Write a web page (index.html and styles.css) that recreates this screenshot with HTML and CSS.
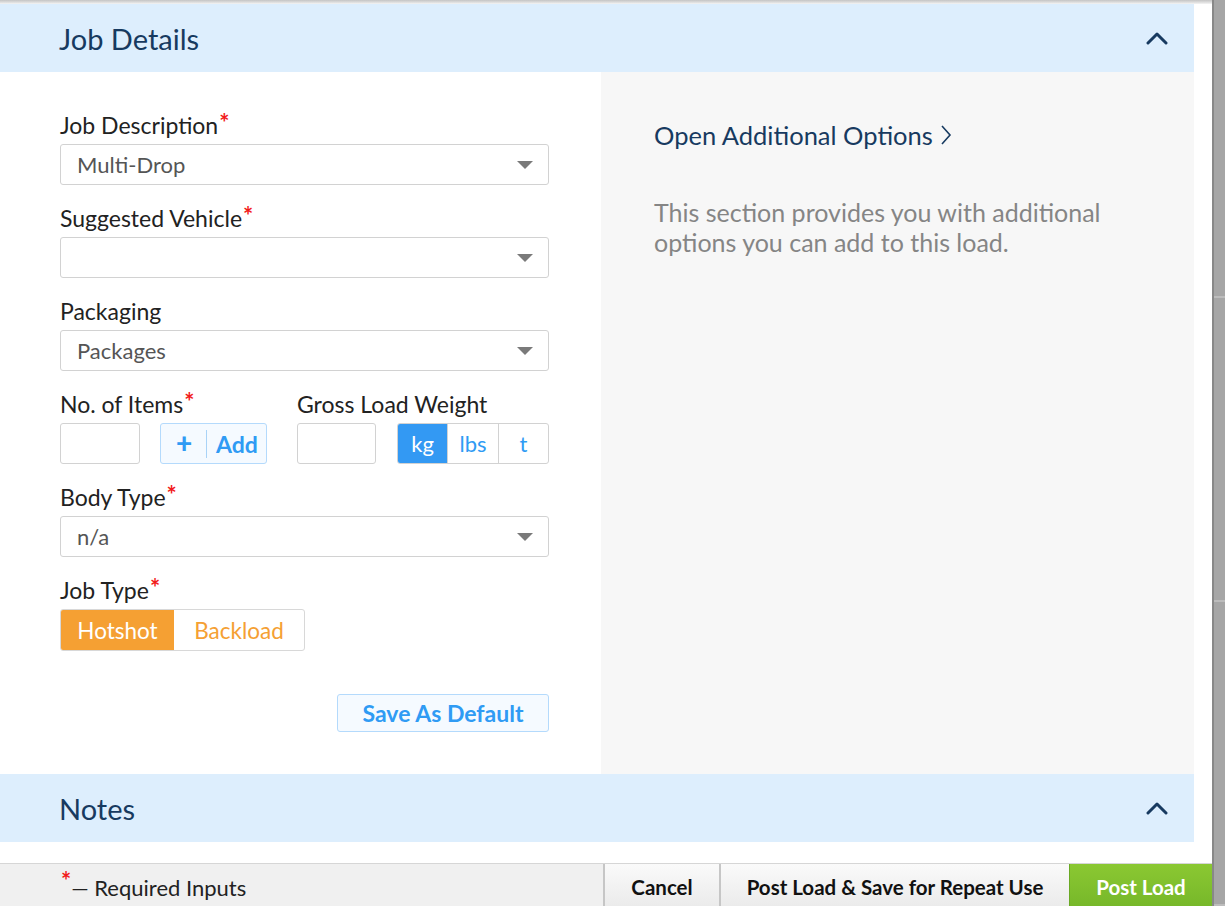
FILE: index.html
```html
<!DOCTYPE html>
<html lang="en">
<head>
 <meta charset="UTF-8">
 <title>Post Load - Job Details</title>
 <link rel="stylesheet" href="styles.css">
</head>
<body>
<div class="screen">
 <div class="modal">
   <div class="top-shade"></div>
   <div class="sections">
     <div class="panel-head">
       <h2>Job Details</h2>
       <svg class="chevron" viewBox="0 0 24 14" width="24" height="14"><path d="M3 12 L12 3 L21 12"/></svg>
     </div>
     <div class="panel-body">
       <div class="form-col">
         <div class="field">
           <label>Job Description<span class="req">*</span></label>
           <div class="select"><span>Multi-Drop</span><i class="caret"></i></div>
         </div>
         <div class="field">
           <label>Suggested Vehicle<span class="req">*</span></label>
           <div class="select"><span></span><i class="caret"></i></div>
         </div>
         <div class="field">
           <label>Packaging</label>
           <div class="select"><span>Packages</span><i class="caret"></i></div>
         </div>
         <div class="field split">
           <div class="sub items">
             <label>No. of Items<span class="req">*</span></label>
             <div class="inline">
               <div class="box small"></div>
               <button class="add-btn"><b>+</b><span class="div"></span>Add</button>
             </div>
           </div>
           <div class="sub weight">
             <label>Gross Load Weight</label>
             <div class="inline">
               <div class="box small"></div>
               <div class="units">
                 <span class="on">kg</span>
                 <span>lbs</span>
                 <span>t</span>
               </div>
             </div>
           </div>
         </div>
         <div class="field">
           <label>Body Type<span class="req">*</span></label>
           <div class="select"><span>n/a</span><i class="caret"></i></div>
         </div>
         <div class="field">
           <label>Job Type<span class="req">*</span></label>
           <div class="toggle">
             <span class="on">Hotshot</span>
             <span>Backload</span>
           </div>
         </div>
         <div class="save-row">
           <button class="save-btn">Save As Default</button>
         </div>
       </div>
       <div class="extra-col">
         <a class="more-link">Open Additional Options <svg viewBox="0 0 12 22" width="12" height="22"><path d="M2 2 L10 11 L2 20"/></svg></a>
         <p>This section provides you with additional options you can add to this load.</p>
       </div>
     </div>
     <div class="panel-head">
       <h2>Notes</h2>
       <svg class="chevron" viewBox="0 0 24 14" width="24" height="14"><path d="M3 12 L12 3 L21 12"/></svg>
     </div>
   </div>
   <div class="footer">
     <div class="legend"><span class="req">*</span>— Required Inputs</div>
     <div class="actions">
       <button class="grey">Cancel</button>
       <button class="grey">Post Load &amp; Save for Repeat Use</button>
       <button class="go">Post Load</button>
     </div>
   </div>
 </div>
 <div class="scrollbar">
   <div class="seg"></div>
   <div class="seg"></div>
   <div class="seg"></div>
 </div>
</div>
</body>
</html>
```

FILE: styles.css
```css
html, body {
  margin: 0;
  padding: 0;
  height: 100%;
  overflow: hidden;
}
body {
  font-family: Lato, "Open Sans", sans-serif;
  color: #222;
  background: #fff;
}
.screen {
  display: flex;
  height: 906px;
}
.modal {
  width: 1212px;
  flex-shrink: 0;
  display: flex;
  flex-direction: column;
  background: #fff;
}
.top-shade {
  height: 7px;
  background: linear-gradient(#c4c4c4, #e6e6e6 75%, #f6f6f6);
}
.sections {
  padding-right: 18px;
}
.panel-head {
  height: 68px;
  background: #ddeefd;
  display: flex;
  align-items: center;
  justify-content: space-between;
  padding: 0 25px 0 59px;
}
.panel-head h2 {
  margin: 0;
  font-size: 29px;
  font-weight: 400;
  color: #173a60;
}
.chevron path {
  fill: none;
  stroke: #173a60;
  stroke-width: 3;
  stroke-linecap: round;
  stroke-linejoin: round;
}
.panel-body {
  display: grid;
  grid-template-columns: 601px 1fr;
}
.form-col {
  padding: 40px 52px 42px 60px;
}
.extra-col {
  background: #f7f7f7;
  padding: 48px 60px 0 53px;
}
.field {
  margin-bottom: 20px;
}
label {
  display: block;
  font-size: 23px;
  line-height: 26px;
  margin-bottom: 6px;
  color: #222;
}
.req {
  color: #f21b1b;
  font-size: 24px;
  font-weight: 700;
  vertical-align: 2px;
  line-height: 0;
  margin-left: 1px;
}
.select {
  height: 41px;
  box-sizing: border-box;
  border: 1px solid #d2d2d2;
  border-radius: 3px;
  display: flex;
  align-items: center;
  justify-content: space-between;
  padding: 0 15px 0 16px;
  font-size: 22px;
  color: #555;
}
.caret {
  width: 0;
  height: 0;
  border-left: 8px solid transparent;
  border-right: 8px solid transparent;
  border-top: 8px solid #7a7a7a;
}
.split {
  display: flex;
  gap: 30px;
}
.inline {
  display: flex;
  gap: 20px;
}
.box {
  height: 41px;
  box-sizing: border-box;
  border: 1px solid #d2d2d2;
  border-radius: 3px;
}
.box.small {
  width: 80px;
}
.add-btn {
  width: 107px;
  height: 41px;
  border: 1px solid #b4dafc;
  border-radius: 3px;
  background: #f5faff;
  color: #2f9bf4;
  font-family: inherit;
  font-size: 23px;
  font-weight: 700;
  display: flex;
  align-items: center;
  padding: 0 0 0 15px;
}
.add-btn b {
  font-size: 28px;
  width: 16px;
  line-height: 1;
  margin-top: -3px;
}
.add-btn .div {
  width: 1px;
  height: 28px;
  background: #a9d3f7;
  margin: 0 9px 0 14px;
}
.weight .inline {
  gap: 21px;
}
.weight .box.small {
  width: 79px;
}
.units {
  display: flex;
  border: 1px solid #d2d2d2;
  border-radius: 3px;
  height: 41px;
  box-sizing: border-box;
  width: 152px;
  overflow: hidden;
}
.units span {
  flex: 1;
  display: flex;
  align-items: center;
  justify-content: center;
  font-size: 22px;
  color: #2f9bf4;
  border-left: 1px solid #d2d2d2;
}
.units span:first-child {
  border-left: none;
}
.units span.on {
  background: #3399f3;
  color: #fff;
}
.toggle {
  display: flex;
  width: 245px;
  height: 42px;
  box-sizing: border-box;
  border: 1px solid #d8d8d8;
  border-radius: 3px;
  overflow: hidden;
}
.toggle span {
  display: flex;
  align-items: center;
  justify-content: center;
  font-size: 22.5px;
  color: #f5a033;
  flex: 1;
}
.toggle span.on {
  flex: 0 0 113px;
  background: #f5a033;
  color: #fff;
}
.save-row {
  display: flex;
  justify-content: flex-end;
  margin-top: 43px;
}
.save-btn {
  width: 212px;
  height: 38px;
  border: 1px solid #b4dafc;
  border-radius: 3px;
  background: #f5faff;
  color: #2f9bf4;
  font-family: inherit;
  font-size: 23px;
  font-weight: 700;
}
.more-link {
  display: flex;
  align-items: center;
  gap: 7px;
  font-size: 25.5px;
  line-height: 30px;
  color: #173a60;
}
.more-link path {
  fill: none;
  stroke: #173a60;
  stroke-width: 1.6;
}
.extra-col p {
  margin: 47px 0 0;
  font-size: 25px;
  line-height: 30px;
  color: #858585;
}
.footer {
  margin-top: 21px;
  height: 42px;
  background: #f0f0f0;
  border-top: 1px solid #d6d6d6;
  display: flex;
  justify-content: space-between;
}
.legend {
  padding: 10px 0 0 61px;
  font-size: 22px;
  color: #222;
}
.legend .req {
  margin: 0;
  vertical-align: 6px;
}
.actions {
  display: flex;
}
.actions button {
  border: none;
  font-family: inherit;
  font-size: 20.5px;
  font-weight: 700;
  padding: 4px 0 0;
  height: 42px;
}
.actions .grey {
  background: linear-gradient(#fafafa, #ebebeb);
  color: #111;
  border-left: 2px solid #c6c6c6;
}
.actions .grey:first-child {
  width: 116px;
}
.actions .grey:nth-child(2) {
  width: 350px;
}
.actions .go {
  width: 143px;
  background: linear-gradient(#8bc832, #77b82a);
  color: #fff;
  border-left: 1px solid #6aa924;
}
.scrollbar {
  width: 13px;
  box-sizing: border-box;
  background: #a6a6a6;
  border-left: 2px solid #888;
  display: flex;
  flex-direction: column;
}
.scrollbar .seg {
  height: 371px;
  border-bottom: 2px solid #bcbcbc;
}
.scrollbar .seg + .seg {
  height: 378px;
}
```
